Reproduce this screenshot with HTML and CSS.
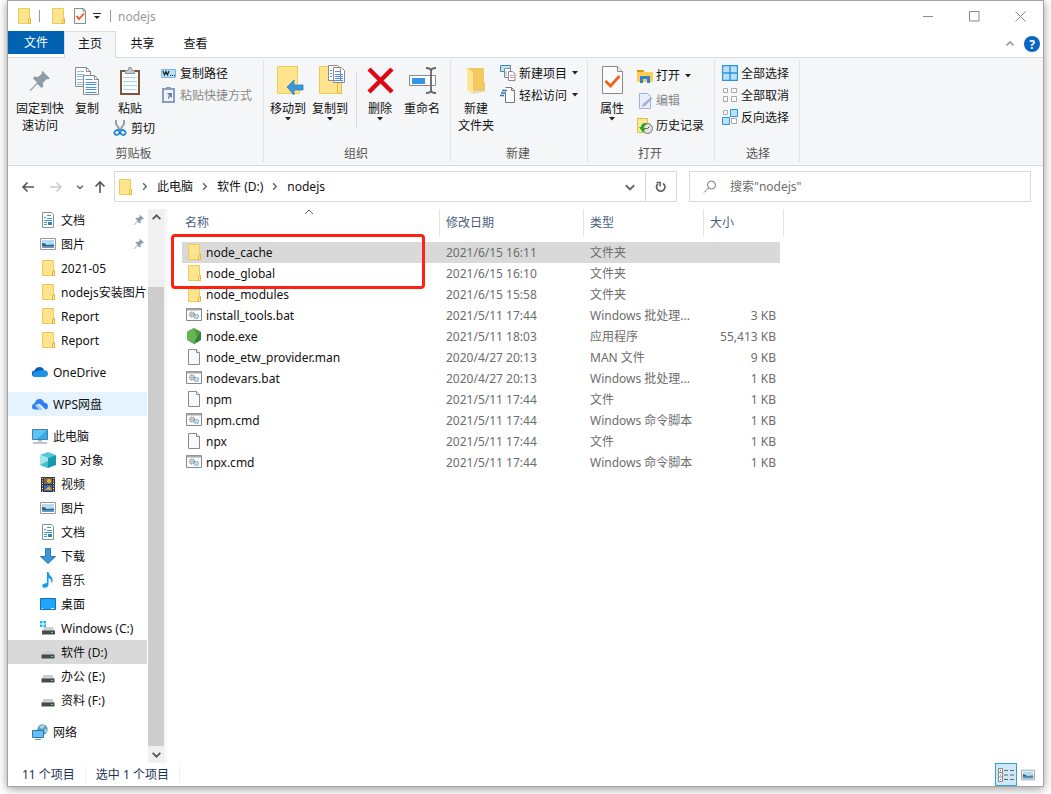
FILE: index.html
```html
<!DOCTYPE html>
<html lang="zh-CN">
<head>
    <meta charset="UTF-8">
    <meta name="viewport" content="width=device-width, initial-scale=1.0">
    <title>nodejs</title>
    <link rel="stylesheet" href="styles.css">
</head>
<body>
    <!-- Icons -->
    <svg class="sprite" aria-hidden="true">
        <symbol id="folder" viewBox="0 0 16 16">
            <path d="M2.5.5h11v10h1v5h-12z" fill="#ffe48f" stroke="#eecb52"/>
            <path d="M12.5 15.5v-4l2-1v5z" fill="#ffe9a2" stroke="#e3b93c"/>
        </symbol>
        <symbol id="doc-check" viewBox="0 0 16 16">
            <path d="M2.5.5h9l2 2v13h-11z" fill="#f9f9f9" stroke="#8b8b8b"/>
            <path d="M11 .5v2.500h2.500" fill="none" stroke="#8b8b8b"/>
            <path d="M4.500 8l2.500 3 5-5.500" fill="none" stroke="#f4511e" stroke-width="1.800"/>
        </symbol>
        <symbol id="pin" viewBox="0 0 20 20">
            <path d="M12.500 0L20 7.500l-2 1-1.500-.5-3.500 4 .3 3.500-2 1.500-4-4L.8 20H0v-1l7-7.500-4-4L4.500 5.500l3.500.5 4-3.500-.500-1.500z" fill="#919da6"/>
        </symbol>
        <symbol id="copy" viewBox="0 0 24 28">
            <path d="M.5.5h11l4 4v15h-15z" fill="#fff" stroke="#8b8b8b"/>
            <path d="M11.500.5v4h4" fill="none" stroke="#8b8b8b"/>
            <path d="M2 4.500h7M2 7.500h7M2 9.500h7M2 12.500h7M2 15.500h7M2 17.500h7" stroke="#8fb6f5"/>
            <path d="M8.500 8.500h11l4 4v15h-15z" fill="#fff" stroke="#8b8b8b"/>
            <path d="M19.500 8.500v4h4" fill="none" stroke="#8b8b8b"/>
            <path d="M10.500 12.500h7M10.500 15.500h11M10.500 17.500h11M10.500 20.500h11M10.500 22.500h11M10.500 25.500h11" stroke="#4b8df8"/>
        </symbol>
        <symbol id="paste" viewBox="0 0 22 30">
            <path d="M1 4h20v25H1z" fill="#7b573a"/>
            <path d="M3 6h16v21H3z" fill="#fafcff"/>
            <path d="M4 11.500h14M4 15.500h14M4 19.500h14M4 23.500h14" stroke="#a9d4ee"/>
            <path d="M6.500 7.500v-3h2.500l1-3h2l1 3h2.500v3z" fill="#c7cbd0" stroke="#8a9096"/>
        </symbol>
        <symbol id="scissors" viewBox="0 0 16 16">
            <path d="M4 0v4l4 6M12 0v4l-4 6" fill="none" stroke="#8e9aa3" stroke-width="1.800"/>
            <ellipse cx="5" cy="12.500" rx="2.600" ry="2.300" fill="none" stroke="#1c87d4" stroke-width="1.800" transform="rotate(-35 5 12.500)"/>
            <ellipse cx="11" cy="12.500" rx="2.600" ry="2.300" fill="none" stroke="#1c87d4" stroke-width="1.800" transform="rotate(35 11 12.500)"/>
        </symbol>
        <symbol id="path" viewBox="0 0 16 16">
            <path d="M.5 4.500h14v8H.5z" fill="#b5dff8" stroke="#7fb8dc"/>
            <path d="M2 6l1.500 4L5 6.500 6.500 10 8 6" fill="none" stroke="#222" stroke-width="1.200"/>
            <path d="M9 10.500h1M11 10.500h1M13 10.500h1" stroke="#222"/>
        </symbol>
        <symbol id="shortcut" viewBox="0 0 16 16">
            <path d="M2 2h11v13H2z" fill="#f0f3fa" stroke="#8a9cc4" stroke-width="2"/>
            <path d="M5 0h5v3H5z" fill="#8a9cc4"/>
            <path d="M6 6h5v5l-1.500-1.500L7 12.500v-2l1-2z" fill="#6d82b4"/>
        </symbol>
        <symbol id="move-to" viewBox="0 0 32 32">
            <path d="M5.500 1.500h20v21h2v6h-22z" fill="#ffe48f" stroke="#eecb52"/>
            <path d="M15 22l7-7v5h9v5h-9v5z" fill="#3a96dd" stroke="#2b7fc4" stroke-width=".8"/>
        </symbol>
        <symbol id="copy-to" viewBox="0 0 32 32">
            <path d="M5.500 1.500h20v27h-20z" fill="#ffe48f" stroke="#eecb52"/>
            <path d="M23.500 28.500v-10l4-2v12z" fill="#ffe08a" stroke="#e3b93c"/>
            <path d="M14.500.5h9l3 3v12h-12zM19.500 2.500h8l3 3v12h-11z" fill="#fff" stroke="#8b8b8b"/>
            <path d="M16 5.500h2M16 8.500h2M16 11.500h2M21 6.500h5M21 9.500h8M21 11.500h8M21 13.500h8M21 15.500h8" stroke="#4b8df8"/>
        </symbol>
        <symbol id="delete" viewBox="0 0 32 32">
            <path d="M5 4l23 23M28 4L5 27" stroke="#df0716" stroke-width="4.500"/>
        </symbol>
        <symbol id="rename" viewBox="0 0 32 32">
            <path d="M3.500 10.500h26v10h-26z" fill="#fff" stroke="#8a8a8a"/>
            <path d="M6 13h13v6H6z" fill="#3396e8"/>
            <path d="M20 3q5 0 5 3v19q0 3-5 3M30 3q-5 0-5 3v19q0 3 5 3" fill="none" stroke="#666" stroke-width="1.800"/>
        </symbol>
        <symbol id="new-folder" viewBox="0 0 32 32">
            <path d="M7 3h17v14l1 1v8H9z" fill="#f3c85f"/>
            <path d="M7 3l6 4v22l-6-4z" fill="#ffe596"/>
            <path d="M13 26h16l-16 3z" fill="#ddd"/>
        </symbol>
        <symbol id="new-item" viewBox="0 0 16 16">
            <path d="M.5.5h10v6H.5z" fill="#bfe2f7" stroke="#4a86a8"/>
            <path d="M4.500 3.500h6v9h-6z" fill="#fff" stroke="#888"/>
            <path d="M8.500 6.500h4l2.500 2.500v6.500H8.500z" fill="#fff" stroke="#888"/>
            <path d="M10 10.500h4M10 12.500h4" stroke="#e39aa4"/>
            <path d="M6 6v5" stroke="#80b6dc"/>
        </symbol>
        <symbol id="easy" viewBox="0 0 16 16">
            <path d="M5.500.5h6l3 3v12h-9v-9" fill="#fff" stroke="#777"/>
            <path d="M11.500.5v3h3" fill="none" stroke="#777"/>
            <path d="M2 3.500h5M1 6h5M0 8.500h4" stroke="#2b76b5" stroke-width="1.400"/>
        </symbol>
        <symbol id="props" viewBox="0 0 32 32">
            <path d="M6.500 1.500h15l5 5v22h-20z" fill="#fbfbfb" stroke="#8b8b8b"/>
            <path d="M21.500 1.500v5h5" fill="#eee" stroke="#8b8b8b"/>
            <path d="M9.500 16l5 5L23.500 11" fill="none" stroke="#f4601b" stroke-width="2.800"/>
        </symbol>
        <symbol id="open" viewBox="0 0 16 16">
            <path d="M0 2h6l1.500 2H16v10H0z" fill="#ffcd50"/>
            <path d="M0 2h6l1.500 2H0z" fill="#d79a00"/>
            <path d="M3 8h10v7h-3v-4H6v4H3z" fill="#2c82d3"/>
        </symbol>
        <symbol id="edit" viewBox="0 0 16 16">
            <path d="M2.500.5h8l3 3v12h-11z" fill="#e8eefa" stroke="#a1b1d2"/>
            <path d="M5 14l1-3 8-7 1.500 1.500-7.500 7.500z" fill="#a1b1d2"/>
        </symbol>
        <symbol id="history" viewBox="0 0 16 16">
            <path d="M.5.5h10v14H.5z" fill="#ffe893" stroke="#dfbd4c"/>
            <circle cx="10.500" cy="10.500" r="5" fill="#e2e2e2" stroke="#777"/>
            <path d="M10.500 10.500l2-2M10.500 10.500h-2" fill="none" stroke="#555"/>
            <path d="M9 5q-5 0-5 4H2l4 5.500L9 10H7q0-3 3-3.500z" fill="#27a327"/>
        </symbol>
        <symbol id="sel-all" viewBox="0 0 16 16">
            <path d="M.5.5h15v15H.5zM8 0v16M0 8h16" fill="#b8e2fb" stroke="#2e93dd" stroke-width="1.400"/>
        </symbol>
        <symbol id="sel-none" viewBox="0 0 16 16">
            <path d="M1.500 1.500h4v4h-4zM9.500 1.500h5v4h-5zM1.500 9.500h4v5h-4zM9.500 9.500h5v5h-5z" fill="#fdfdfd" stroke="#a9a9a9"/>
        </symbol>
        <symbol id="sel-invert" viewBox="0 0 16 16">
            <path d="M1.500 1.500h4v4h-4zM9.500 9.500h5v5h-5z" fill="#fdfdfd" stroke="#a9a9a9"/>
            <path d="M8.500.5h7v7h-7zM.5 8.500h7v7h-7z" fill="#b8e2fb" stroke="#2e93dd"/>
        </symbol>
        <symbol id="document" viewBox="0 0 16 16">
            <path d="M2.500.5h9l2 2v13h-11z" fill="#fff" stroke="#8a8f93"/>
            <path d="M4 5.500h2M7 3.500h4M7 6.500h5M4 8.500h8M4 10.500h3M4 12.500h3" stroke="#2b9be0"/>
            <path d="M8 10h4v3H8z" fill="#457f9c"/>
        </symbol>
        <symbol id="picture" viewBox="0 0 16 16">
            <path d="M.5 2.500h15v11H.5z" fill="#fff" stroke="#9a9a9a"/>
            <path d="M2 4h12v8H2z" fill="#b4dafa"/>
            <path d="M2 7q3 0 5 2l7-.5v1.500H2z" fill="#37626a"/>
            <path d="M2 10h12v2H2z" fill="#5b97c4"/>
        </symbol>
        <symbol id="onedrive" viewBox="0 0 16 16">
            <path d="M3 12.500a3 3 0 0 1-.5-6q1.500-3.500 5-3.500 3.500 0 4.500 3.200l-8 6.300z" fill="#0a5fb4"/>
            <path d="M.5 11q0-3 3-3.500l4-1 5.500-.3q3 .8 3 3.300 0 3-3 3.500H3q-2-.2-2.500-2z" fill="#1b93e4"/>
        </symbol>
        <symbol id="wps" viewBox="0 0 16 16">
            <path d="M0 11q0-3 3-4Q4 2.500 8 3q3 .3 4 3.500 4 .5 4 4 0 2.500-2.500 3L9 9Q7 7 5 8l5 5.500H3Q0 13 0 11z" fill="#2d7ff3"/>
            <path d="M5 8l-2 1.500 4 4h3z" fill="#a9d0ff"/>
        </symbol>
        <symbol id="pc" viewBox="0 0 16 16">
            <path d="M.5 1.500h15v10H.5z" fill="#5ec3f8" stroke="#41829e"/>
            <path d="M15 2v9H5z" fill="#35a9ec"/>
            <path d="M6 13h4M1 15h14" stroke="#7d8d98"/>
        </symbol>
        <symbol id="cube" viewBox="0 0 16 16">
            <path d="M0 3l8-3 8 3-8 3z" fill="#50c9d4"/>
            <path d="M0 3l8 3v10l-8-3z" fill="#a4e5ea"/>
            <path d="M16 3L8 6v10l8-3z" fill="#179aaf"/>
            <path d="M0 13l8-4v7z" fill="#40c1ca"/>
        </symbol>
        <symbol id="video" viewBox="0 0 16 16">
            <path d="M1 1h14v15H1z" fill="#353535"/>
            <path d="M4 2h8v6H4z" fill="#7a6b4d"/>
            <path d="M4 9h8v6H4z" fill="#3665bd"/>
            <circle cx="9" cy="5" r="2" fill="#e8bd2d"/>
            <path d="M5 14l4-4 3 4z" fill="#e2a32c"/>
            <path d="M2.500 2v14M13.500 2v14" stroke="#fff" stroke-dasharray="1 1.500"/>
        </symbol>
        <symbol id="download" viewBox="0 0 16 16">
            <path d="M5.500.5h5v8h5L8 15.500.5 8.500h5z" fill="#3a96dd" stroke="#2c7dbf"/>
        </symbol>
        <symbol id="music" viewBox="0 0 16 16">
            <path d="M7 0h1.500q.5 3 3 5 2.500 3-.2 6.500Q12 7 8.500 6v7q-.5 2.500-3.500 2.800-3 0-2.700-2.300Q3 11 7 11z" fill="#149cf0"/>
        </symbol>
        <symbol id="desktop" viewBox="0 0 16 16">
            <path d="M.5 2.500h15v11H.5z" fill="#1fa3fb" stroke="#0d74bd"/>
            <path d="M2 12.500h1M11 12.500h3" stroke="#fff"/>
        </symbol>
        <symbol id="drive" viewBox="0 0 16 16">
            <path d="M3.500 7h9l2 4h-13z" fill="#cdcfd1"/>
            <path d="M1.500 10.500h13v4h-13z" fill="#474a4c"/>
            <path d="M11 12.500h2" stroke="#52dd4f"/>
        </symbol>
        <symbol id="win-drive" viewBox="0 0 16 16">
            <path d="M0 1h2.500v2.500H0zM3.500 1H6v2.500H3.500zM0 4.500h2.500V7H0zM3.500 4.500H6V7H3.500z" fill="#19b4ee"/>
            <path d="M4 7h9l1.500 4h-12z" fill="#cdcfd1"/>
            <path d="M2 10.500h13v4H2z" fill="#474a4c"/>
            <path d="M11 12.500h2" stroke="#52dd4f"/>
        </symbol>
        <symbol id="network" viewBox="0 0 16 16">
            <circle cx="10.500" cy="5.500" r="5.200" fill="#5f9fbe"/>
            <path d="M7 3q4-3 6-1l-3 3zM12 6l3-1-1 4z" fill="#b7dae6"/>
            <path d="M.5 6.500h11v7H.5z" fill="#62c0fa" stroke="#33779f"/>
            <path d="M3 15.500h6" stroke="#8397a3"/>
        </symbol>
        <symbol id="batch" viewBox="0 0 16 16">
            <path d="M.5 1.500h15v12H.5z" fill="#fff" stroke="#87898b"/>
            <path d="M1 2.500h14" stroke="#a2a9ae" stroke-width="2"/>
            <circle cx="6" cy="7.500" r="2.300" fill="none" stroke="#888" stroke-width="1.500" stroke-dasharray="1 .5"/>
            <circle cx="6" cy="7.500" r="1" fill="#999"/>
            <circle cx="10.500" cy="9.500" r="2" fill="#d2e9f7" stroke="#72a9cd" stroke-width="1.300" stroke-dasharray="1 .4"/>
        </symbol>
        <symbol id="node" viewBox="0 0 16 16">
            <path d="M8 0l7 3.800v8L8 16l-7-4.200v-8z" fill="#4a9b45"/>
            <path d="M8 0l3 9-3 7-7-4.200v-8z" fill="#67b457"/>
            <path d="M15 4v8l-7 4 3-7z" fill="#37803a"/>
        </symbol>
        <symbol id="file" viewBox="0 0 16 16">
            <path d="M2.500.5h8l3 3v12h-11z" fill="#f8f9fa" stroke="#8a8a8a"/>
            <path d="M10.500.5v3h3" fill="#fff" stroke="#8a8a8a"/>
        </symbol>
        <symbol id="back" viewBox="0 0 16 16">
            <path d="M14 8H3M7.500 3.500L3 8l4.500 4.500" fill="none" stroke="currentColor" stroke-width="1.600"/>
        </symbol>
        <symbol id="chevron" viewBox="0 0 10 10">
            <path d="M1.500 3.500L5 7l3.500-3.500" fill="none" stroke="currentColor" stroke-width="1.600"/>
        </symbol>
        <symbol id="caret" viewBox="0 0 6 4">
            <path d="M0 0h6L3 3.500z" fill="#222"/>
        </symbol>
        <symbol id="refresh" viewBox="0 0 16 16">
            <path d="M5 4.800a4.200 4.200 0 1 0 5 -.4" fill="none" stroke="#666" stroke-width="1.800"/>
            <path d="M3.500 3.500h3.700v4" fill="none" stroke="#666" stroke-width="1.600"/>
        </symbol>
        <symbol id="search" viewBox="0 0 16 16">
            <circle cx="9.500" cy="6" r="4" fill="none" stroke="#777"/>
            <path d="M6.500 9L2 13.500" stroke="#777"/>
        </symbol>
    </svg>

    <div class="window">
        <header class="titlebar">
            <svg class="icon"><use href="#folder"/></svg>
            <span class="bar"></span>
            <button class="quick" aria-label="新建文件夹"><svg class="icon"><use href="#folder"/></svg></button>
            <button class="quick" aria-label="属性"><svg class="icon"><use href="#doc-check"/></svg></button>
            <button class="customize" aria-label="自定义快速访问工具栏"><svg width="8" height="7" viewBox="0 0 8 7"><path d="M0 .5h8" stroke="#222"/><path d="M1 3h6L4 6z" fill="#222"/></svg></button>
            <span class="bar"></span>
            <span class="title">nodejs</span>
            <div class="controls">
                <button aria-label="最小化"><svg width="11" height="11"><path d="M0 5.500h10" stroke="#888"/></svg></button>
                <button aria-label="最大化"><svg width="11" height="11"><path d="M.5.5h9.500v9.500H.5z" fill="none" stroke="#888"/></svg></button>
                <button aria-label="关闭"><svg width="11" height="11"><path d="M.5.5l10 10M10.500.5l-10 10" stroke="#888"/></svg></button>
            </div>
        </header>

        <nav class="tabs">
            <button class="tab file">文件</button>
            <button class="tab active">主页</button>
            <button class="tab">共享</button>
            <button class="tab">查看</button>
            <div class="tabs-right">
                <button aria-label="最小化功能区"><svg class="collapse" width="10" height="10"><use href="#chevron"/></svg></button>
                <button class="help" aria-label="帮助">?</button>
            </div>
        </nav>

        <div class="ribbon">
            <section class="group clipboard">
                <div class="tools">
                    <button class="large pin-btn"><span class="pic"><svg width="20" height="20"><use href="#pin"/></svg></span>固定到快<br>速访问</button>
                    <button class="large copy-btn"><span class="pic"><svg width="24" height="28"><use href="#copy"/></svg></span>复制</button>
                    <div class="stack paste-col">
                        <button class="large"><span class="pic"><svg width="22" height="30"><use href="#paste"/></svg></span>粘贴</button>
                        <button class="small"><svg class="icon"><use href="#scissors"/></svg>剪切</button>
                    </div>
                    <div class="stack">
                        <button class="small"><svg class="icon"><use href="#path"/></svg>复制路径</button>
                        <button class="small" disabled><svg class="icon"><use href="#shortcut"/></svg>粘贴快捷方式</button>
                    </div>
                </div>
                <h2>剪贴板</h2>
            </section>
            <section class="group organize">
                <div class="tools">
                    <button class="large"><span class="pic"><svg width="32" height="32"><use href="#move-to"/></svg></span>移动到<svg class="caret"><use href="#caret"/></svg></button>
                    <button class="large"><span class="pic"><svg width="32" height="32"><use href="#copy-to"/></svg></span>复制到<svg class="caret"><use href="#caret"/></svg></button>
                    <span class="split"></span>
                    <button class="large"><span class="pic"><svg width="32" height="32"><use href="#delete"/></svg></span>删除<svg class="caret"><use href="#caret"/></svg></button>
                    <button class="large"><span class="pic"><svg width="32" height="32"><use href="#rename"/></svg></span>重命名</button>
                </div>
                <h2>组织</h2>
            </section>
            <section class="group create">
                <div class="tools">
                    <button class="large"><span class="pic"><svg width="32" height="32"><use href="#new-folder"/></svg></span>新建<br>文件夹</button>
                    <div class="stack">
                        <button class="small"><svg class="icon"><use href="#new-item"/></svg>新建项目<svg class="caret"><use href="#caret"/></svg></button>
                        <button class="small"><svg class="icon"><use href="#easy"/></svg>轻松访问<svg class="caret"><use href="#caret"/></svg></button>
                    </div>
                </div>
                <h2>新建</h2>
            </section>
            <section class="group open">
                <div class="tools">
                    <button class="large"><span class="pic"><svg width="32" height="32"><use href="#props"/></svg></span>属性<svg class="caret"><use href="#caret"/></svg></button>
                    <div class="stack">
                        <button class="small"><svg class="icon"><use href="#open"/></svg>打开<svg class="caret"><use href="#caret"/></svg></button>
                        <button class="small" disabled><svg class="icon"><use href="#edit"/></svg>编辑</button>
                        <button class="small"><svg class="icon"><use href="#history"/></svg>历史记录</button>
                    </div>
                </div>
                <h2>打开</h2>
            </section>
            <section class="group select">
                <div class="tools">
                    <div class="stack">
                        <button class="small"><svg class="icon"><use href="#sel-all"/></svg>全部选择</button>
                        <button class="small"><svg class="icon"><use href="#sel-none"/></svg>全部取消</button>
                        <button class="small"><svg class="icon"><use href="#sel-invert"/></svg>反向选择</button>
                    </div>
                </div>
                <h2>选择</h2>
            </section>
        </div>

        <div class="nav-row">
            <div class="history">
                <button aria-label="后退"><svg class="icon"><use href="#back"/></svg></button>
                <button aria-label="前进" disabled><svg class="icon forward"><use href="#back"/></svg></button>
                <button class="recent" aria-label="最近浏览的位置"><svg width="8" height="8"><use href="#chevron"/></svg></button>
                <button aria-label="上移"><svg class="icon up"><use href="#back"/></svg></button>
            </div>
            <div class="address">
                <svg class="icon"><use href="#folder"/></svg>
                <svg class="sep"><use href="#chevron"/></svg>
                <a href="#">此电脑</a>
                <svg class="sep"><use href="#chevron"/></svg>
                <a href="#">软件 (D:)</a>
                <svg class="sep"><use href="#chevron"/></svg>
                <a href="#">nodejs</a>
                <button class="drop" aria-label="以前的位置"><svg width="12" height="12"><use href="#chevron"/></svg></button>
                <button class="refresh" aria-label="刷新"><svg class="icon"><use href="#refresh"/></svg></button>
            </div>
            <label class="search">
                <svg class="icon"><use href="#search"/></svg>
                <input type="text" placeholder='搜索"nodejs"' aria-label="搜索">
            </label>
        </div>

        <main class="main">
            <nav class="tree">
                <ul>
                    <li><a class="sub" href="#"><svg class="icon"><use href="#document"/></svg>文档<svg class="pinned"><use href="#pin"/></svg></a></li>
                    <li><a class="sub" href="#"><svg class="icon"><use href="#picture"/></svg>图片<svg class="pinned"><use href="#pin"/></svg></a></li>
                    <li><a class="sub" href="#"><svg class="icon"><use href="#folder"/></svg>2021-05</a></li>
                    <li><a class="sub" href="#"><svg class="icon"><use href="#folder"/></svg>nodejs安装图片</a></li>
                    <li><a class="sub" href="#"><svg class="icon"><use href="#folder"/></svg>Report</a></li>
                    <li><a class="sub" href="#"><svg class="icon"><use href="#folder"/></svg>Report</a></li>
                </ul>
                <ul>
                    <li><a href="#"><svg class="icon"><use href="#onedrive"/></svg>OneDrive</a></li>
                </ul>
                <ul>
                    <li><a class="hover" href="#"><svg class="icon"><use href="#wps"/></svg>WPS网盘</a></li>
                </ul>
                <ul>
                    <li><a href="#"><svg class="icon"><use href="#pc"/></svg>此电脑</a></li>
                    <li><a class="sub" href="#"><svg class="icon"><use href="#cube"/></svg>3D 对象</a></li>
                    <li><a class="sub" href="#"><svg class="icon"><use href="#video"/></svg>视频</a></li>
                    <li><a class="sub" href="#"><svg class="icon"><use href="#picture"/></svg>图片</a></li>
                    <li><a class="sub" href="#"><svg class="icon"><use href="#document"/></svg>文档</a></li>
                    <li><a class="sub" href="#"><svg class="icon"><use href="#download"/></svg>下载</a></li>
                    <li><a class="sub" href="#"><svg class="icon"><use href="#music"/></svg>音乐</a></li>
                    <li><a class="sub" href="#"><svg class="icon"><use href="#desktop"/></svg>桌面</a></li>
                    <li><a class="sub" href="#"><svg class="icon"><use href="#win-drive"/></svg>Windows (C:)</a></li>
                    <li><a class="sub current" href="#"><svg class="icon"><use href="#drive"/></svg>软件 (D:)</a></li>
                    <li><a class="sub" href="#"><svg class="icon"><use href="#drive"/></svg>办公 (E:)</a></li>
                    <li><a class="sub" href="#"><svg class="icon"><use href="#drive"/></svg>资料 (F:)</a></li>
                </ul>
                <ul>
                    <li><a href="#"><svg class="icon"><use href="#network"/></svg>网络</a></li>
                </ul>
            </nav>
            <div class="scrollbar">
                <button aria-label="向上滚动"><svg class="collapse" width="11" height="11"><use href="#chevron"/></svg></button>
                <div class="thumb"></div>
                <button aria-label="向下滚动"><svg width="11" height="11"><use href="#chevron"/></svg></button>
            </div>

            <div class="files">
                <table>
                    <thead>
                        <tr>
                            <th class="name">名称<svg class="sort" viewBox="0 0 10 6"><path d="M1 5l4-4 4 4" fill="none" stroke="#666"/></svg></th>
                            <th class="date">修改日期</th>
                            <th class="type">类型</th>
                            <th class="size">大小</th>
                        </tr>
                    </thead>
                    <tbody>
                        <tr class="selected"><td><svg class="icon"><use href="#folder"/></svg>node_cache</td><td>2021/6/15 16:11</td><td>文件夹</td><td></td></tr>
                        <tr><td><svg class="icon"><use href="#folder"/></svg>node_global</td><td>2021/6/15 16:10</td><td>文件夹</td><td></td></tr>
                        <tr><td><svg class="icon"><use href="#folder"/></svg>node_modules</td><td>2021/6/15 15:58</td><td>文件夹</td><td></td></tr>
                        <tr><td><svg class="icon"><use href="#batch"/></svg>install_tools.bat</td><td>2021/5/11 17:44</td><td>Windows 批处理...</td><td>3 KB</td></tr>
                        <tr><td><svg class="icon"><use href="#node"/></svg>node.exe</td><td>2021/5/11 18:03</td><td>应用程序</td><td>55,413 KB</td></tr>
                        <tr><td><svg class="icon"><use href="#file"/></svg>node_etw_provider.man</td><td>2020/4/27 20:13</td><td>MAN 文件</td><td>9 KB</td></tr>
                        <tr><td><svg class="icon"><use href="#batch"/></svg>nodevars.bat</td><td>2020/4/27 20:13</td><td>Windows 批处理...</td><td>1 KB</td></tr>
                        <tr><td><svg class="icon"><use href="#file"/></svg>npm</td><td>2021/5/11 17:44</td><td>文件</td><td>1 KB</td></tr>
                        <tr><td><svg class="icon"><use href="#batch"/></svg>npm.cmd</td><td>2021/5/11 17:44</td><td>Windows 命令脚本</td><td>1 KB</td></tr>
                        <tr><td><svg class="icon"><use href="#file"/></svg>npx</td><td>2021/5/11 17:44</td><td>文件</td><td>1 KB</td></tr>
                        <tr><td><svg class="icon"><use href="#batch"/></svg>npx.cmd</td><td>2021/5/11 17:44</td><td>Windows 命令脚本</td><td>1 KB</td></tr>
                    </tbody>
                </table>
                <div class="highlight"></div>
            </div>
        </main>

        <footer class="status">
            <span>11 个项目</span>
            <span>选中 1 个项目</span>
            <div class="views">
                <button class="on" aria-label="详细信息"><svg width="16" height="14"><path d="M.5.5h4v13h-4zM.5 4.500h4M.5 9h4" fill="#fff" stroke="#888"/><path d="M2 2.500h1M2 11.500h1" stroke="#c33"/><path d="M2 7h1" stroke="#36c"/><path d="M6 2.500h4M12 2.500h4M6 7h4M12 7h4M6 11.500h4M12 11.500h4" stroke="#666"/></svg></button>
                <button aria-label="大图标"><svg width="14" height="14"><use href="#picture"/></svg></button>
            </div>
        </footer>
    </div>
</body>
</html>
```
FILE: styles.css
```css
* {
    box-sizing: border-box;
}
body {
    margin: 0;
    min-height: 100vh;
    padding: 0 7px 7px;
    display: flex;
    flex-direction: column;
    background: #fff;
    color: #111;
    font-family: "Noto Sans", "Noto Sans CJK SC", sans-serif;
    font-size: 12px;
    line-height: 17px;
}
button {
    padding: 0;
    border: none;
    background: none;
    color: inherit;
    font: inherit;
    display: flex;
    align-items: center;
    justify-content: center;
}
a {
    color: inherit;
    text-decoration: none;
}
svg {
    display: block;
    flex-shrink: 0;
}
.sprite {
    position: absolute;
    width: 0;
    height: 0;
}
.icon {
    width: 16px;
    height: 16px;
}
.window {
    flex: 1;
    display: flex;
    flex-direction: column;
    background: #fff;
    border: 1px solid #a3a3a3;
    box-shadow: 0 2px 9px rgba(0, 0, 0, 0.4);
}

/* Title bar */
.titlebar {
    display: flex;
    align-items: center;
    height: 30px;
    padding-left: 8px;
}
.bar {
    width: 1px;
    height: 12px;
    margin: 0 7px;
    background: #999;
}
.quick {
    width: 22px;
}
.customize {
    width: 12px;
}
.title {
    color: #999;
}
.controls {
    display: flex;
    margin-left: auto;
}
.controls button {
    width: 46px;
    height: 28px;
}

/* Tabs */
.tabs {
    display: flex;
    height: 27px;
    border-bottom: 1px solid #dadbdc;
}
.tab {
    width: 53px;
    height: 25px;
}
.tab.file {
    width: 56px;
    height: 23px;
    background: #0063b1;
    color: #fff;
}
.tab.active {
    height: 27px;
    width: 52px;
    padding-bottom: 3px;
    background: #f5f6f7;
    border: 1px solid #dadbdc;
    border-bottom: none;
}
.tabs-right {
    display: flex;
    align-items: center;
    gap: 9px;
    margin-left: auto;
    padding-right: 3px;
    color: #999;
}
.collapse {
    transform: rotate(180deg);
}
.help {
    width: 16px;
    height: 16px;
    border-radius: 50%;
    background: #0b66c3;
    color: #fff;
    font-weight: bold;
}

/* Ribbon */
.ribbon {
    display: flex;
    height: 108px;
    background: #f5f6f7;
    border-bottom: 1px solid #dadbdc;
}
.group {
    display: flex;
    flex-direction: column;
    margin: 2px 0 3px;
    padding: 2px 5px 0 3px;
    border-right: 1px solid #e2e3e4;
}
.group h2 {
    margin: 0;
    color: #555;
    font-size: 12px;
    font-weight: normal;
    line-height: 17px;
    text-align: center;
}
.tools {
    display: flex;
    align-items: flex-start;
    flex: 1;
}
.large {
    flex-direction: column;
    min-width: 42px;
    padding-top: 3px;
}
.pic {
    display: flex;
    align-items: flex-start;
    justify-content: center;
    height: 35px;
}
.caret {
    width: 6px;
    height: 4px;
}
.clipboard {
    width: 256px;
    padding: 2px 8px 0 4px;
}
.pin-btn {
    width: 56px;
}
.copy-btn {
    min-width: 38px;
}
.clipboard .pic {
    align-items: center;
    padding-bottom: 3px;
}
.stack {
    display: flex;
    flex-direction: column;
    align-items: flex-start;
}
.paste-col {
    width: 55px;
}
.paste-col .large {
    width: 48px;
}
.paste-col .small {
    margin-left: 6px;
}
.small {
    gap: 3px;
    height: 22px;
    white-space: nowrap;
}
.small .caret {
    margin-left: 2px;
}
button:disabled {
    color: #888;
}
.split {
    width: 1px;
    height: 56px;
    margin: 10px 2px 0 5px;
    background: #dcdddf;
}
.organize {
    width: 187px;
}
.create {
    width: 137px;
}
.create .large {
    width: 44px;
    margin-right: 2px;
}
.open {
    width: 127px;
}
.open .stack {
    padding-top: 1px;
    margin-left: 4px;
}
.open .small {
    height: 25px;
}
.select {
    width: 85px;
    padding-left: 7px;
}

/* Address row */
.nav-row {
    display: grid;
    grid-template-columns: 94px 563fr 354fr;
    height: 42px;
    padding: 5px 12px 6px;
}
.history {
    display: flex;
    align-items: center;
    gap: 12px;
    color: #555;
}
.history button:disabled {
    color: #ccc;
}
.forward {
    transform: rotate(180deg);
}
.up {
    transform: rotate(90deg);
}
.history .recent {
    width: 8px;
}
.history .recent + button {
    margin-left: -4px;
}
.address {
    display: flex;
    align-items: center;
    padding-left: 2px;
    border: 1px solid #d9d9d9;
}
.sep {
    width: 9px;
    height: 9px;
    margin: 0 8px 0 7px;
    color: #666;
    transform: rotate(-90deg);
}
.drop {
    width: 30px;
    height: 29px;
    margin-left: auto;
    color: #666;
}
.refresh {
    width: 31px;
    height: 29px;
    border-left: 1px solid #d9d9d9;
}
.search {
    display: flex;
    align-items: center;
    gap: 12px;
    margin-left: 12px;
    padding: 0 12px;
    border: 1px solid #d9d9d9;
}
.search input {
    flex: 1;
    min-width: 0;
    padding: 0;
    border: none;
    outline: none;
    font: inherit;
}
.search input::placeholder {
    color: #6d6d6d;
}

/* Main area */
.main {
    display: flex;
    flex: 1;
}
.tree {
    width: 139px;
}
.tree ul {
    margin: 0 0 8px;
    padding: 0;
    list-style: none;
}
.tree a {
    display: flex;
    align-items: center;
    gap: 5px;
    height: 24px;
    padding-left: 24px;
    white-space: nowrap;
}
.tree .sub {
    padding-left: 32px;
}
.tree .hover {
    background: #e5f3ff;
}
.tree .current {
    background: #d9d9d9;
}
.pinned {
    width: 10px;
    height: 10px;
    margin: 0 3px 0 auto;
}
.scrollbar {
    display: flex;
    flex-direction: column;
    width: 17px;
    margin: 1px 1px 0;
    padding-right: 1px;
    background: #f0f0f0;
    color: #555;
}
.scrollbar button {
    height: 17px;
}
.thumb {
    flex: 1;
    margin-top: 61px;
    background: #cdcdcd;
}
.files {
    position: relative;
    flex: 1;
    margin-top: 1px;
    padding-left: 15px;
    border-left: 1px solid #f3f3f3;
}
.files table {
    width: 602px;
    table-layout: fixed;
    border-collapse: separate;
    border-spacing: 0;
}
.files th {
    height: 27px;
    padding: 0 0 0 6px;
    border-right: 1px solid #e3e3e3;
    color: #4c607a;
    font-weight: normal;
    text-align: left;
}
.files .name {
    position: relative;
    width: 258px;
    padding-left: 3px;
}
.files .date {
    width: 144px;
}
.files .type {
    width: 120px;
}
.files .size {
    width: 80px;
}
.sort {
    position: absolute;
    top: 0;
    left: 122px;
    width: 10px;
    height: 6px;
}
.files tbody::before {
    content: "";
    display: block;
    height: 6px;
}
.files td {
    height: 21px;
    padding: 0 0 0 6px;
    color: #6d6d6d;
    white-space: nowrap;
}
.files td:first-child {
    padding-left: 4px;
    color: #111;
}
.files td:last-child {
    padding-right: 4px;
    border-right: 4px solid transparent;
    background-clip: padding-box;
    text-align: right;
}
.files td .icon {
    display: inline-block;
    margin-right: 4px;
    vertical-align: -3px;
}
.selected td {
    background-color: #d9d9d9;
}
.highlight {
    position: absolute;
    top: 25px;
    left: 4px;
    width: 254px;
    height: 55px;
    border: 3px solid #ff2213;
    border-radius: 4px;
}

/* Status bar */
.status {
    display: flex;
    align-items: center;
    height: 23px;
    padding: 0 6px 0 14px;
    color: #1e3354;
}
.status span {
    margin-right: 10px;
    padding-right: 10px;
    border-right: 1px solid #f0f0f0;
}
.views {
    display: flex;
    gap: 2px;
    height: 23px;
    margin-left: auto;
}
.views button {
    width: 18px;
}
.views .on {
    width: 22px;
    background: #cde8f6;
    border: 1px solid #3c9fd3;
}
```
